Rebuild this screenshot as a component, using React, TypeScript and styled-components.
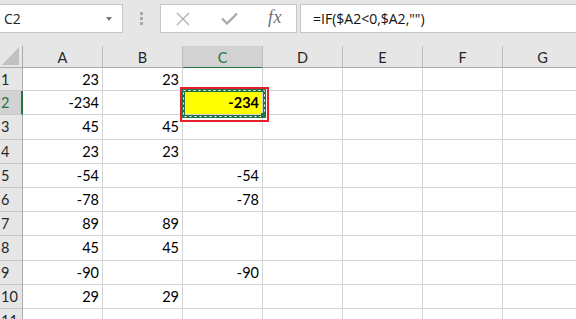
import styled, { createGlobalStyle } from 'styled-components';

const GlobalStyle = createGlobalStyle`
  html, body {
    margin: 0;
    padding: 0;
    width: 576px;
    height: 319px;
    overflow: hidden;
    background: #e6e6e6;
  }
`;

const Page = styled.div`
  width: 576px;
  height: 319px;
  overflow: hidden;
  background: #e6e6e6;
`;

const Toolbar = styled.div`
  display: flex;
  align-items: flex-start;
  height: 46px;
  padding-top: 4px;
  box-sizing: border-box;
`;

const InputBox = styled.div`
  box-sizing: border-box;
  height: 29px;
  background: #fff;
  border: 1px solid #c6c6c6;
  display: flex;
  align-items: center;
  font-family: 'Open Sans', 'Liberation Sans', sans-serif;
  font-size: 14px;
  color: #222;
`;

const NameBox = styled(InputBox)`
  margin-left: -1px;
  width: 124px;
  padding: 0 10px 0 4px;
  justify-content: space-between;
`;

const DropArrow = styled.span`
  width: 0;
  height: 0;
  border-left: 3.5px solid transparent;
  border-right: 3.5px solid transparent;
  border-top: 4px solid #777;
  margin-top: 1px;
`;

const Grip = styled.div`
  width: 37px;
  height: 29px;
  display: flex;
  flex-direction: column;
  align-items: center;
  justify-content: center;
  gap: 2px;

  span {
    width: 3px;
    height: 3px;
    background: #a8a8a8;
  }
`;

const ActionBox = styled(InputBox)`
  width: 137px;
  padding: 0 14px 0 14px;
  justify-content: space-between;
`;

const FxLabel = styled.span`
  font-family: 'Liberation Serif', 'DejaVu Serif', serif;
  font-style: italic;
  font-size: 18px;
  color: #6f6f6f;
  letter-spacing: 0.5px;
  margin-top: -2px;
`;

const FormulaBox = styled(InputBox)`
  flex: 1;
  margin-left: 3px;
  margin-right: -2px;
  padding-left: 12px;
  color: #111;
`;

const Sheet = styled.div`
  display: grid;
  grid-template-columns: 23px repeat(7, 80px);
  grid-template-rows: 22px 23.2px repeat(10, 24.2px) 24.2px;
  font-family: Lato, 'Open Sans', sans-serif;
  font-size: 14.5px;
`;

const Corner = styled.div`
  position: relative;
  background: #e6e6e6;
  border-right: 1px solid #ababab;
  border-bottom: 1px solid #ababab;
  box-sizing: border-box;

  &::after {
    content: '';
    position: absolute;
    right: 3px;
    bottom: 2px;
    width: 0;
    height: 0;
    border-left: 17px solid transparent;
    border-bottom: 18px solid #c2c2c2;
  }
`;

const ColHeader = styled.div<{ $active?: boolean }>`
  box-sizing: border-box;
  display: flex;
  align-items: center;
  justify-content: center;
  background: ${({ $active }) => ($active ? '#d2d2d2' : '#e6e6e6')};
  border-right: 1px solid #bdbdbd;
  border-bottom: ${({ $active }) => ($active ? '2px solid #217346' : '1px solid #ababab')};
  margin-bottom: ${({ $active }) => ($active ? '-1px' : '0')};
  color: ${({ $active }) => ($active ? '#217346' : '#262626')};
  padding-top: 1px;
`;

const RowHeader = styled.div<{ $active?: boolean }>`
  box-sizing: border-box;
  display: flex;
  align-items: center;
  padding-left: 1px;
  background: ${({ $active }) => ($active ? '#d2d2d2' : '#e6e6e6')};
  border-right: ${({ $active }) => ($active ? '2px solid #217346' : '1px solid #ababab')};
  border-bottom: 1px solid #c8c8c8;
  color: ${({ $active }) => ($active ? '#217346' : '#262626')};
`;

const Cell = styled.div<{ $selected?: boolean }>`
  position: relative;
  z-index: ${({ $selected }) => ($selected ? 2 : 'auto')};
  box-sizing: border-box;
  display: flex;
  align-items: center;
  justify-content: flex-end;
  padding-right: 3px;
  background: ${({ $selected }) => ($selected ? '#ffff00' : '#fff')};
  border-right: 1px solid #d4d4d4;
  border-bottom: 1px solid #d4d4d4;
  color: #000;
  font-weight: ${({ $selected }) => ($selected ? 700 : 400)};
`;

const Highlight = styled.div`
  position: absolute;
  left: -3px;
  top: -4px;
  width: 89px;
  height: 35px;
  box-sizing: border-box;
  border: 2px solid #e5202b;
  pointer-events: none;
`;

const Selection = styled.div`
  position: absolute;
  left: -1px;
  top: -2px;
  width: 84px;
  height: 29px;
  box-sizing: border-box;
  border: 3px solid #217346;
  pointer-events: none;

  svg {
    position: absolute;
    left: -3px;
    top: -3px;
  }
`;

const FillHandle = styled.span`
  position: absolute;
  right: -3px;
  bottom: -3px;
  width: 5px;
  height: 5px;
  background: #217346;
`;

const columns = ['A', 'B', 'C', 'D', 'E', 'F', 'G'];

const data: [string, string, string][] = [
  ['23', '23', ''],
  ['-234', '', '-234'],
  ['45', '45', ''],
  ['23', '23', ''],
  ['-54', '', '-54'],
  ['-78', '', '-78'],
  ['89', '89', ''],
  ['45', '45', ''],
  ['-90', '', '-90'],
  ['29', '29', ''],
  ['', '', ''],
];

function Ants() {
  return (
    <svg width="84" height="29" viewBox="0 0 84 29">
      <rect
        x="1.5"
        y="1.5"
        width="81"
        height="26"
        fill="none"
        stroke="#fff"
        strokeWidth="1"
        strokeDasharray="2 3"
      />
    </svg>
  );
}

export default function App() {
  return (
    <Page>
      <GlobalStyle />
      <Toolbar>
        <NameBox>
          <span>C2</span>
          <DropArrow />
        </NameBox>
        <Grip>
          <span />
          <span />
          <span />
        </Grip>
        <ActionBox>
          <svg width="16" height="14" viewBox="0 0 16 14">
            <path d="M2 1 L14 13 M14 1 L2 13" stroke="#b0b0b0" strokeWidth="1.3" fill="none" />
          </svg>
          <svg width="17" height="13" viewBox="0 0 17 13">
            <path d="M1 6.5 L6 11.5 L16 1.5" stroke="#a6a6a6" strokeWidth="2.2" fill="none" />
          </svg>
          <FxLabel>fx</FxLabel>
        </ActionBox>
        <FormulaBox>=IF($A2&lt;0,$A2,"")</FormulaBox>
      </Toolbar>

      <Sheet>
        <Corner />
        {columns.map((col) => (
          <ColHeader key={col} $active={col === 'C'}>
            {col}
          </ColHeader>
        ))}
        {data.map((row, r) => {
          const rowNum = r + 1;
          return [
            <RowHeader key={`h${rowNum}`} $active={rowNum === 2}>
              {rowNum}
            </RowHeader>,
            ...columns.map((col, c) => {
              const value = c < 3 ? row[c] : '';
              const selected = col === 'C' && rowNum === 2;
              return (
                <Cell key={`${col}${rowNum}`} $selected={selected}>
                  {value}
                  {selected && (
                    <>
                      <Highlight />
                      <Selection>
                        <Ants />
                        <FillHandle />
                      </Selection>
                    </>
                  )}
                </Cell>
              );
            }),
          ];
        })}
      </Sheet>
    </Page>
  );
}
